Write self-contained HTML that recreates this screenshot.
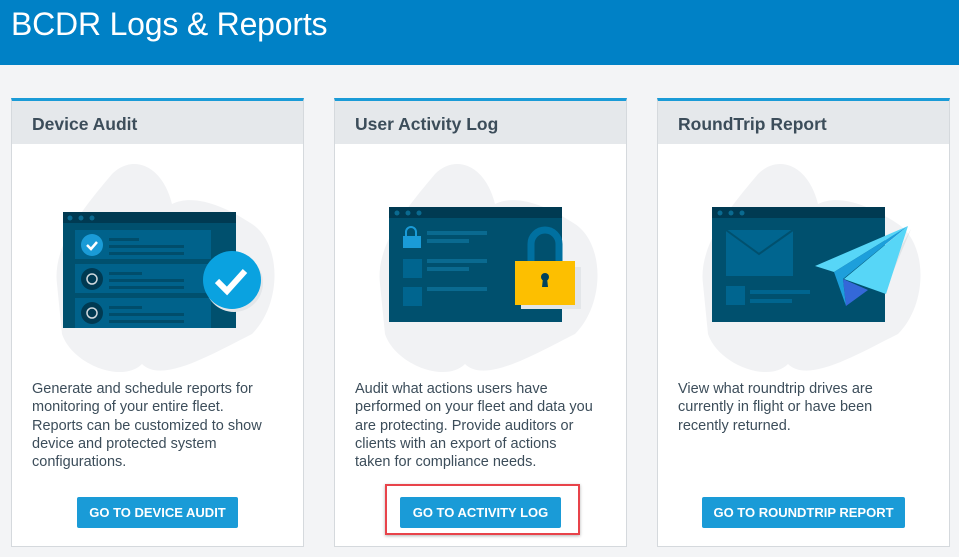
<!DOCTYPE html>
<html><head><style>
*{margin:0;padding:0;box-sizing:border-box}
body{width:959px;height:557px;background:#f3f4f6;font-family:"Liberation Sans",sans-serif;position:relative;overflow:hidden}
.top{position:absolute;left:0;top:0;width:959px;height:65px;background:#0081c6}
.top h1{position:absolute;left:11px;top:6px;font-size:32px;font-weight:normal;color:#fff;letter-spacing:-0.2px}
.card{position:absolute;top:98px;width:293px;height:449px;background:#fff;border:1px solid #d5d9dd;border-top:3px solid #1a9bd7}
.hd{height:43px;background:#e5e8eb;font-size:17.5px;font-weight:bold;color:#3c4d5a;padding:13px 0 0 20px}
.txt{position:absolute;left:20px;top:279px;white-space:nowrap;font-size:14.5px;line-height:18.3px;color:#3c4d5a}
.btn{position:absolute;top:396px;height:31px;background:#1a9bd7;color:#fff;font-weight:bold;font-size:13px;text-align:center;line-height:31px;border-radius:2px}
svg{position:absolute;left:0;top:43px}
</style></head><body>
<div class="top"><h1>BCDR Logs &amp; Reports</h1></div>

<div class="card" style="left:11px">
<div class="hd">Device Audit</div>
<svg width="293" height="240" viewBox="0 0 293 240">
<path d="M45 140 C40 100 75 60 100 30 C120 10 150 20 160 60 C180 50 210 60 240 80 C270 100 270 160 240 190 C200 210 150 240 130 220 C110 240 60 220 50 190 Z" fill="#f1f2f4"/>
<rect x="51" y="68" width="173" height="116" fill="#00506e"/>
<rect x="51" y="68" width="173" height="11" fill="#003a52"/>
<circle cx="58" cy="74" r="2.5" fill="#0a6a90"/><circle cx="69" cy="74" r="2.5" fill="#0a6a90"/><circle cx="80" cy="74" r="2.5" fill="#0a6a90"/>
<g fill="#00628b"><rect x="63" y="86" width="136" height="29"/><rect x="63" y="120" width="136" height="29"/><rect x="63" y="154" width="136" height="30"/></g>
<circle cx="80" cy="101" r="11" fill="#1a9bd7"/><path d="M75 101l4 4 6-7" stroke="#fff" stroke-width="2.5" fill="none"/>
<circle cx="80" cy="135" r="11" fill="#003a52"/><circle cx="80" cy="135" r="5" stroke="#cfd8dd" stroke-width="1.5" fill="none"/>
<circle cx="80" cy="169" r="11" fill="#003a52"/><circle cx="80" cy="169" r="5" stroke="#cfd8dd" stroke-width="1.5" fill="none"/>
<g fill="#004d6b"><rect x="97" y="94" width="30" height="3"/><rect x="97" y="101" width="75" height="3"/><rect x="97" y="108" width="75" height="3"/>
<rect x="97" y="128" width="33" height="3"/><rect x="97" y="135" width="75" height="3"/><rect x="97" y="142" width="75" height="3"/>
<rect x="97" y="162" width="33" height="3"/><rect x="97" y="169" width="75" height="3"/><rect x="97" y="176" width="75" height="3"/></g>
<circle cx="222" cy="139" r="29" fill="#e3e6e9"/>
<circle cx="220" cy="136" r="29" fill="#0aa2e0"/>
<path d="M205 137l10 10 18-20" stroke="#fff" stroke-width="6" fill="none"/>
</svg>
<div class="txt">Generate and schedule reports for<br>monitoring of your entire fleet.<br>Reports can be customized to show<br>device and protected system<br>configurations.</div>
<div class="btn" style="left:65px;width:161px">GO TO DEVICE AUDIT</div>
</div>

<div class="card" style="left:334px">
<div class="hd">User Activity Log</div>
<svg width="293" height="240" viewBox="0 0 293 240">
<path d="M45 140 C40 100 75 60 100 30 C120 10 150 20 160 60 C180 50 210 60 240 80 C270 100 270 160 240 190 C200 210 150 240 130 220 C110 240 60 220 50 190 Z" fill="#f1f2f4"/>
<rect x="54" y="63" width="173" height="115" fill="#00506e"/>
<rect x="54" y="63" width="173" height="11" fill="#003a52"/>
<circle cx="62" cy="69" r="2.5" fill="#0a6a90"/><circle cx="73" cy="69" r="2.5" fill="#0a6a90"/><circle cx="84" cy="69" r="2.5" fill="#0a6a90"/>
<path d="M71 92v-4a5 5 0 0 1 10 0v4" stroke="#1a9bd7" stroke-width="2" fill="none"/><rect x="68" y="92" width="18" height="12" fill="#1a9bd7"/>
<g fill="#00658f"><rect x="68" y="115" width="19" height="19"/><rect x="68" y="143" width="19" height="19"/></g>
<g fill="#0a6a90"><rect x="92" y="87" width="60" height="4"/><rect x="92" y="95" width="42" height="4"/><rect x="92" y="115" width="60" height="4"/><rect x="92" y="123" width="42" height="4"/><rect x="92" y="143" width="60" height="4"/></g>
<rect x="186" y="123" width="60" height="42" fill="#e3e6e9"/>
<path d="M196 118v-18a14 14 0 0 1 28 0v18" stroke="#0070a0" stroke-width="7" fill="none"/>
<rect x="180" y="117" width="60" height="44" fill="#fdbf00"/>
<circle cx="210" cy="133" r="4" fill="#00425c"/><path d="M208 134h4l1 9h-6z" fill="#00425c"/>
</svg>
<div class="txt">Audit what actions users have<br>performed on your fleet and data you<br>are protecting. Provide auditors or<br>clients with an export of actions<br>taken for compliance needs.</div>
<div class="btn" style="left:65px;width:161px">GO TO ACTIVITY LOG</div>
<div style="position:absolute;left:50px;top:383px;width:195px;height:51px;border:2px solid #e8434a;box-shadow:0 1px 3px rgba(0,0,0,.3)"></div>
</div>

<div class="card" style="left:657px">
<div class="hd">RoundTrip Report</div>
<svg width="293" height="240" viewBox="0 0 293 240">
<path d="M45 140 C40 100 75 60 100 30 C120 10 150 20 160 60 C180 50 210 60 240 80 C270 100 270 160 240 190 C200 210 150 240 130 220 C110 240 60 220 50 190 Z" fill="#f1f2f4"/>
<rect x="54" y="63" width="173" height="115" fill="#00506e"/>
<rect x="54" y="63" width="173" height="11" fill="#003a52"/>
<circle cx="62" cy="69" r="2.5" fill="#0a6a90"/><circle cx="73" cy="69" r="2.5" fill="#0a6a90"/><circle cx="84" cy="69" r="2.5" fill="#0a6a90"/>
<rect x="68" y="86" width="67" height="46" fill="#00658f"/><path d="M68 86l33 24 34-24" stroke="#00506e" stroke-width="2" fill="none"/>
<rect x="68" y="142" width="19" height="19" fill="#00658f"/>
<g fill="#00658f"><rect x="92" y="146" width="60" height="4"/><rect x="92" y="155" width="42" height="4"/></g>
<path d="M253 85 L220 145 L230 140 Z" fill="#dfe3e6"/>
<path d="M250 82 L157 122 L176 128 Z" fill="#57d6f7"/>
<path d="M176 128 L250 82 L185 135 L188 162 Z" fill="#1d9fdb"/>
<path d="M185 135 L188 162 L210 146 Z" fill="#3468d8"/>
<path d="M250 82 L186 135 L228 150 Z" fill="#57d6f7"/>
</svg>
<div class="txt">View what roundtrip drives are<br>currently in flight or have been<br>recently returned.</div>
<div class="btn" style="left:44px;width:203px">GO TO ROUNDTRIP REPORT</div>
</div>
</body></html>
